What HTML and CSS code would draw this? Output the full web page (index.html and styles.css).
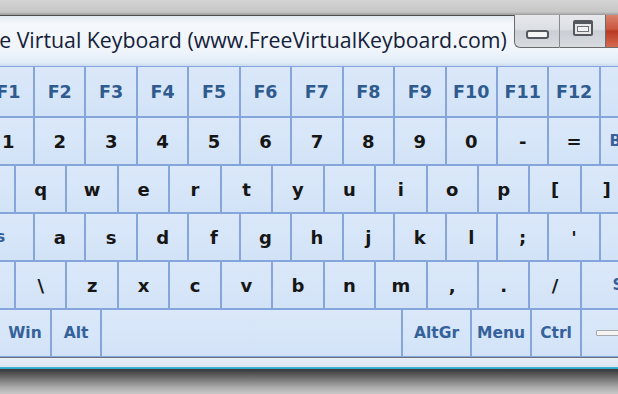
FILE: index.html
```html
<!DOCTYPE html>
<html>
<head>
<meta charset="utf-8">
<link rel="stylesheet" href="styles.css">
</head>
<body>
<div class="window">
  <div class="titlebar">
    <div class="title">Free Virtual Keyboard (www.FreeVirtualKeyboard.com)</div>
    <div class="controls">
      <div class="btn btn-min"><span class="glyph-min"></span></div>
      <div class="btn btn-max"><span class="glyph-max"></span></div>
      <div class="btn btn-close"></div>
    </div>
  </div>
  <div class="keyboard">
    <div class="row row-f">
      <div class="key fn">F1</div><div class="key fn">F2</div><div class="key fn">F3</div><div class="key fn">F4</div>
      <div class="key fn">F5</div><div class="key fn">F6</div><div class="key fn">F7</div><div class="key fn">F8</div>
      <div class="key fn">F9</div><div class="key fn">F10</div><div class="key fn">F11</div><div class="key fn">F12</div>
      <div class="key fn w-blank"></div>
    </div>
    <div class="row row-num">
      <div class="key">1</div><div class="key">2</div><div class="key">3</div><div class="key">4</div>
      <div class="key">5</div><div class="key">6</div><div class="key">7</div><div class="key">8</div>
      <div class="key">9</div><div class="key">0</div><div class="key">-</div><div class="key">=</div>
      <div class="key mod w-bksp">Bksp</div>
    </div>
    <div class="row row-q">
      <div class="key mod w-tab">Tab</div>
      <div class="key">q</div><div class="key">w</div><div class="key">e</div><div class="key">r</div>
      <div class="key">t</div><div class="key">y</div><div class="key">u</div><div class="key">i</div>
      <div class="key">o</div><div class="key">p</div><div class="key">[</div><div class="key">]</div>
    </div>
    <div class="row row-a">
      <div class="key mod w-caps">Caps</div>
      <div class="key">a</div><div class="key">s</div><div class="key">d</div><div class="key">f</div>
      <div class="key">g</div><div class="key">h</div><div class="key">j</div><div class="key">k</div>
      <div class="key">l</div><div class="key">;</div><div class="key">'</div>
      <div class="key mod w-enter"></div>
    </div>
    <div class="row row-z">
      <div class="key mod w-lshift">Shift</div>
      <div class="key">\</div><div class="key">z</div><div class="key">x</div><div class="key">c</div>
      <div class="key">v</div><div class="key">b</div><div class="key">n</div><div class="key">m</div>
      <div class="key">,</div><div class="key">.</div><div class="key">/</div>
      <div class="key mod w-rshift">Shift</div>
    </div>
    <div class="row row-b">
      <div class="key mod w-lctrl">Ctrl</div>
      <div class="key mod w-win">Win</div>
      <div class="key mod w-alt">Alt</div>
      <div class="key mod w-space"></div>
      <div class="key mod w-altgr">AltGr</div>
      <div class="key mod w-menu">Menu</div>
      <div class="key mod w-ctrl">Ctrl</div>
      <div class="key mod w-opt"><span class="slider"></span></div>
    </div>
  </div>
  <div class="bottom-edge"></div>
  <div class="shadow"></div>
</div>
</body>
</html>
```
FILE: styles.css
```css
html, body {
  margin: 0;
  padding: 0;
  width: 618px;
  height: 394px;
  overflow: hidden;
  background: #b8b8b8;
}

.window {
  width: 618px;
  height: 394px;
  overflow: hidden;
  display: flex;
  flex-direction: column;
}

.titlebar {
  height: 66px;
  flex: none;
  display: flex;
  justify-content: space-between;
  background:
    linear-gradient(to bottom, #d4d4d4 0px, #c6c6c6 12px, #9a9a9a 15px, #4e4e4e 15px, #4e4e4e 16px, #e4ebf3 16px, #f5f8fc 24px, #f0f5fb 50px, #e2ecf7 63px, #cfdff2 65px, #cfdff2 66px);
  overflow: hidden;
}

.title {
  font-family: "Open Sans", "Noto Sans", sans-serif;
  font-size: 21.3px;
  color: #14213a;
  white-space: nowrap;
  margin-left: -32.5px;
  padding-top: 25px;
  line-height: 30px;
}

.controls {
  display: flex;
  flex: none;
  margin-top: 15px;
  height: 33px;
}

.btn {
  height: 33px;
  box-sizing: border-box;
  border: 1px solid #6b6b6b;
  border-top: none;
  display: flex;
  align-items: center;
  justify-content: center;
}

.btn-min {
  width: 46px;
  border-radius: 0 0 0 6px;
  border-right: 1px solid #8a8a8a;
  background: linear-gradient(to bottom, #e6e8ec 0%, #dcdfe4 45%, #cbced4 50%, #d8dbe0 100%);
}

.btn-max {
  width: 45px;
  border-left: none;
  border-right: none;
  background: linear-gradient(to bottom, #e6e8ec 0%, #dcdfe4 45%, #cbced4 50%, #d8dbe0 100%);
}

.btn-close {
  width: 13px;
  border-right: none;
  background: linear-gradient(to bottom, #d9826f 0%, #c9563f 45%, #b83a22 50%, #d56a50 100%);
}

.glyph-min {
  display: block;
  width: 19px;
  height: 5px;
  border: 2px solid #55595f;
  border-radius: 3px;
  background: #f6f6f6;
  margin-top: 7px;
}

.glyph-max {
  display: block;
  width: 16px;
  height: 10px;
  border: 2px solid #55595f;
  border-top-width: 4px;
  border-radius: 2px;
  background: #f3f3f3;
  box-shadow: inset 0 0 0 2px #e9e9e9, inset 0 0 0 3px #6f7378;
  margin-top: -6px;
}

.keyboard {
  flex: none;
  height: 291px;
  overflow: hidden;
  background: #d5e4f7;
}

.row {
  display: flex;
  height: 48px;
}

.row-f { height: 51px; margin-left: -17.45px; }
.row-num { margin-left: -17.45px; }
.row-q { margin-left: -55px; }
.row-a { margin-left: -65.5px; }
.row-z { margin-left: -85px; }
.row-b { margin-left: -61px; }

.key {
  flex: none;
  box-sizing: border-box;
  width: 51.45px;
  height: 100%;
  border: 1px solid #86a5da;
  background: linear-gradient(to bottom, #dae8f9 0%, #d3e3f7 100%);
  display: flex;
  align-items: center;
  justify-content: center;
  font-family: "DejaVu Sans", Verdana, sans-serif;
  font-weight: bold;
  font-size: 18px;
  color: #161616;
  white-space: nowrap;
}

.key.fn {
  color: #2f5b8f;
  font-size: 17.5px;
}

.key.mod {
  color: #35629a;
  font-size: 15.5px;
}

.w-blank { width: 80px; }
.w-bksp { width: 62px; }
.w-tab { width: 70px; }
.w-lshift { width: 100px; }
.w-caps { width: 99.5px; }
.w-enter { width: 80px; }
.w-rshift { width: 105px; }
.w-lctrl { width: 60px; }
.w-win { width: 52px; }
.w-alt { width: 50px; }
.w-space { width: 301px; }
.w-altgr { width: 69px; }
.w-menu { width: 60px; }
.w-ctrl { width: 50px; }
.w-opt { width: 80px; justify-content: flex-start; padding-left: 14px; }

.slider {
  display: block;
  width: 60px;
  height: 4px;
  border: 1px solid #a6a9ae;
  background: #f4f4f2;
  border-radius: 1px;
}

.bottom-edge {
  flex: none;
  height: 13px;
  background: linear-gradient(to bottom, #6d727a 0px, #6d727a 1px, #e8eef6 1px, #dbe6f2 10px, #49b7d6 10px, #2aa6cc 12px, #444 12px, #3a3a3a 13px);
}

.shadow {
  flex: 1;
  background: linear-gradient(to bottom, #3c3c3c 0%, #6a6a6a 30%, #a8a8a8 70%, #c8c8c8 100%);
}
```
